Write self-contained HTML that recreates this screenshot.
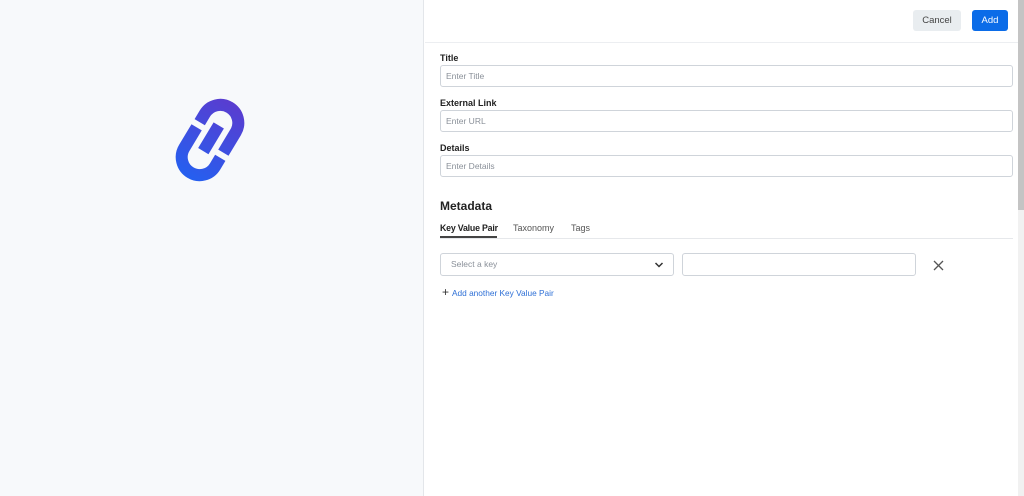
<!DOCTYPE html>
<html><head><style>
*{box-sizing:border-box;margin:0;padding:0}
body{width:1024px;height:496px;overflow:hidden;font-family:"Liberation Sans",sans-serif;background:#fff;position:relative}
.left{position:absolute;left:0;top:0;width:424px;height:496px;background:#f7f9fb;border-right:1px solid #e3e6ea}
.abs{position:absolute}
.btn{position:absolute;top:10px;height:21px;border-radius:3px;font-size:9.5px;line-height:22px;text-align:center}
.lbl{position:absolute;left:440px;font-size:9px;font-weight:bold;color:#222}
.inp{position:absolute;left:440px;width:573px;height:22px;border:1px solid #cfd4da;border-radius:3px;font-size:8.5px;color:#8a9099;line-height:20px;padding-left:5px}
</style></head><body>
<div class="left"></div>
<svg class="abs" style="left:160px;top:85px" width="100" height="110" viewBox="-50 -55 100 110">
<defs><linearGradient id="g" gradientUnits="userSpaceOnUse" x1="0" y1="-45" x2="0" y2="45"><stop offset="0" stop-color="#5a3ccf"/><stop offset="1" stop-color="#2460f0"/></linearGradient></defs>
<g transform="rotate(31)" fill="none" stroke="url(#g)" stroke-width="12">
<path d="M-18 -10 V-20 A18 18 0 0 1 18 -20 V4"/>
<path d="M18 10 V20 A18 18 0 0 1 -18 20 V-4"/>
<path d="M0 -17 V13"/>
</g></svg>
<div class="abs" style="left:425px;top:42px;width:593px;height:1px;background:#eceef1"></div>
<div class="btn" style="left:913px;width:48px;background:#e9edf0;color:#444">Cancel</div>
<div class="btn" style="left:972px;width:36px;background:#0b6ce8;color:#fff">Add</div>
<div class="lbl" style="top:53px">Title</div>
<div class="inp" style="top:65px">Enter Title</div>
<div class="lbl" style="top:98px">External Link</div>
<div class="inp" style="top:110px">Enter URL</div>
<div class="lbl" style="top:143px">Details</div>
<div class="inp" style="top:155px">Enter Details</div>
<div class="abs" style="left:440px;top:199px;font-size:12px;font-weight:bold;color:#222">Metadata</div>
<div class="abs" style="left:440px;top:223px;font-size:8.8px;font-weight:bold;color:#222;letter-spacing:-0.2px">Key Value Pair</div>
<div class="abs" style="left:513px;top:223px;font-size:9px;color:#555">Taxonomy</div>
<div class="abs" style="left:571px;top:223px;font-size:9px;color:#555">Tags</div>
<div class="abs" style="left:440px;top:238px;width:573px;height:1px;background:#e6e8eb"></div>
<div class="abs" style="left:440px;top:236px;width:57px;height:2px;background:#444"></div>
<div class="inp" style="top:253px;width:234px;height:23px;padding-left:10px">Select a key</div>
<svg class="abs" style="left:654px;top:261px" width="10" height="8"><path d="M1.5 2 L5 5.5 L8.5 2" fill="none" stroke="#333" stroke-width="1.5"/></svg>
<div class="inp" style="top:253px;left:682px;width:234px;height:23px"></div>
<svg class="abs" style="left:933px;top:260px" width="11" height="11"><path d="M1 1L10 10M10 1L1 10" stroke="#555" stroke-width="1.3"/></svg>
<div class="abs" style="left:442px;top:285px;font-size:12px;color:#333">+</div>
<div class="abs" style="left:452px;top:288px;font-size:8.3px;color:#2d6fd6">Add another Key Value Pair</div>
<div class="abs" style="left:1018px;top:0;width:6px;height:496px;background:#f1f1f1"></div>
<div class="abs" style="left:1018px;top:0;width:6px;height:210px;background:#c4c4c4"></div>
</body></html>
